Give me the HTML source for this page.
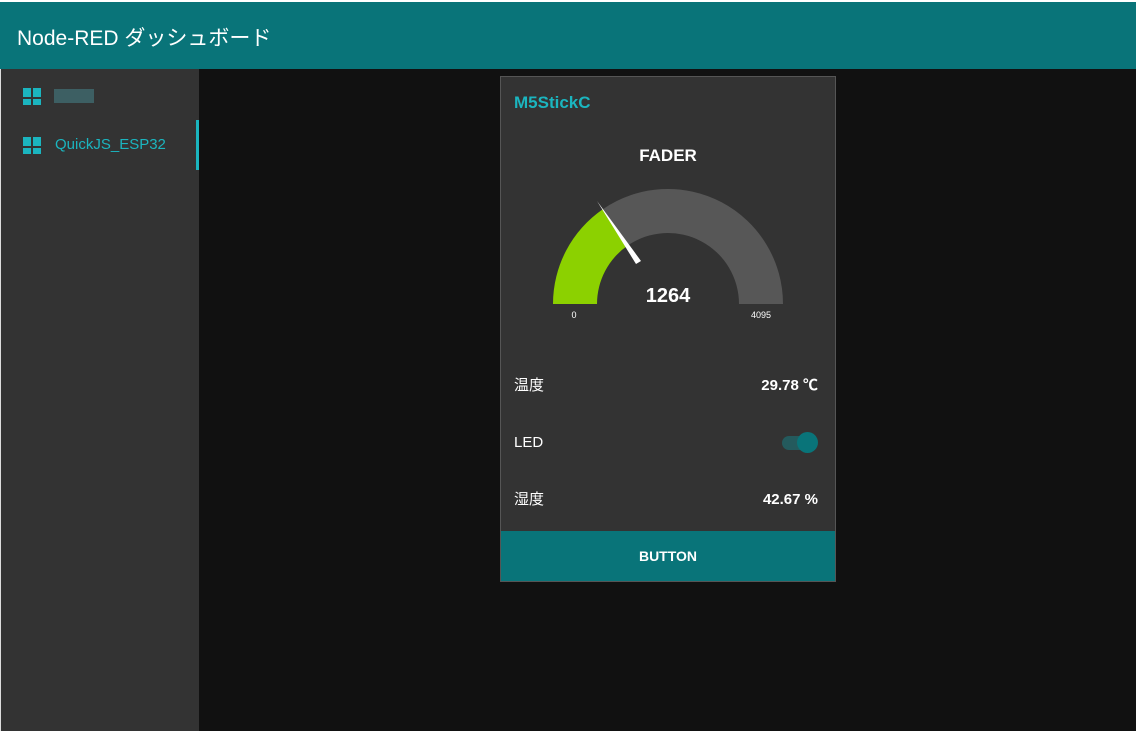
<!DOCTYPE html>
<html><head><meta charset="utf-8"><style>
*{margin:0;padding:0;box-sizing:border-box}
body{width:1136px;height:731px;background:#111;font-family:"Liberation Sans","Noto Sans CJK JP",sans-serif;position:relative;overflow:hidden}
.hdr{position:absolute;left:0;top:0;width:1136px;height:69px;background:#097479;color:#fff;font-size:21px;padding:20px 0 0 17px;border-top:2px solid #fff}
.side{position:absolute;left:0;top:69px;width:199px;height:662px;background:#333;border-left:1px solid #ddd}
.ico{position:absolute;width:19px;height:19px}
.ico i{position:absolute;background:#1bb5bf}
.card{position:absolute;left:500px;top:76px;width:336px;height:506px;background:#333;border:1px solid #555}
.t{position:absolute;color:#fff;font-size:15px;line-height:20px}
.b{font-weight:bold}
</style></head><body>
<div class="hdr">Node-RED ダッシュボード</div>
<div class="side">
 <div class="ico" style="left:22px;top:19px"><i style="left:0;top:0;width:8px;height:9px"></i><i style="left:10px;top:0;width:8px;height:9px"></i><i style="left:0;top:11px;width:8px;height:6px"></i><i style="left:10px;top:11px;width:8px;height:6px"></i></div>
 <div style="position:absolute;left:53px;top:20px;width:40px;height:14px;background:#3d5f63"></div>
 <div class="ico" style="left:22px;top:68px"><i style="left:0;top:0;width:8px;height:9px"></i><i style="left:10px;top:0;width:8px;height:9px"></i><i style="left:0;top:11px;width:8px;height:6px"></i><i style="left:10px;top:11px;width:8px;height:6px"></i></div>
 <div style="position:absolute;left:54px;top:67px;color:#1bb5bf;font-size:15px">QuickJS_ESP32</div>
 <div style="position:absolute;left:195px;top:51px;width:3px;height:50px;background:#1bb5bf"></div>
</div>
<div class="card">
 <div class="t b" style="left:13px;top:16px;color:#1bb5bf;font-size:17px">M5StickC</div>
 <div class="t b" style="left:0;width:334px;text-align:center;top:69px;font-size:17px">FADER</div>
 <svg style="position:absolute;left:-501px;top:-77px" width="1136" height="731">
  <path d="M553 304 A115 115 0 0 1 603 209.1 L627.9 245.4 A71 71 0 0 0 597 304Z" fill="#8cd100"/>
  <path d="M603 209.1 A115 115 0 0 1 783 304 L739 304 A71 71 0 0 0 627.9 245.4Z" fill="#575757"/>
  <polygon points="597,201 641,261 636,264" fill="#fff"/>
  <text x="668" y="302" fill="#fff" font-size="20" font-weight="bold" text-anchor="middle" font-family="Liberation Sans">1264</text>
  <text x="574" y="318" fill="#fff" font-size="9" text-anchor="middle" font-family="Liberation Sans">0</text>
  <text x="761" y="318" fill="#fff" font-size="9" text-anchor="middle" font-family="Liberation Sans">4095</text>
 </svg>
 <div class="t" style="left:13px;top:299px">温度</div>
 <div class="t b" style="right:17px;top:299px">29.78 ℃</div>
 <div class="t" style="left:13px;top:356px">LED</div>
 <div style="position:absolute;left:281px;top:359px;width:34px;height:14px;border-radius:7px;background:#245a5d"></div>
 <div style="position:absolute;left:296px;top:355px;width:21px;height:21px;border-radius:50%;background:#097479"></div>
 <div class="t" style="left:13px;top:413px">湿度</div>
 <div class="t b" style="right:17px;top:413px">42.67 %</div>
 <div style="position:absolute;left:0;top:454px;width:334px;height:50px;background:#097479;color:#fff;font-size:14px;font-weight:bold;text-align:center;line-height:50px">BUTTON</div>
</div>
</body></html>
